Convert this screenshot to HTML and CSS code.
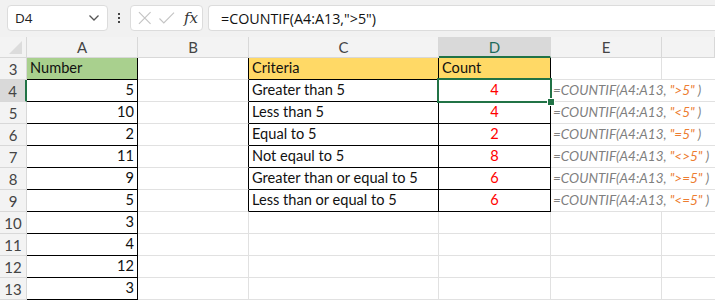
FILE: index.html
```html
<!DOCTYPE html>
<html lang="en">
<head>
    <meta charset="UTF-8">
    <title>COUNTIF examples</title>
    <link rel="stylesheet" href="styles.css">
</head>
<body>
    <!-- Formula bar -->
    <div class="formula-bar">
        <div class="name-box">
            <span>D4</span>
            <svg width="12" height="8" viewBox="0 0 12 8"><path d="M1.5 1.5 L6 6 L10.5 1.5" fill="none" stroke="#555" stroke-width="1.3"/></svg>
        </div>
        <div class="dots"><i></i><i></i><i></i></div>
        <div class="fx-box">
            <svg width="16" height="16" viewBox="0 0 16 16"><path d="M2 2 L14 14 M14 2 L2 14" stroke="#c4c4c4" stroke-width="1.2"/></svg>
            <svg width="18" height="16" viewBox="0 0 18 16"><path d="M1.5 8.5 L6 13 L16.5 2.5" fill="none" stroke="#c4c4c4" stroke-width="1.2"/></svg>
            <span class="fx">fx</span>
        </div>
        <div class="formula-input">=COUNTIF(A4:A13,"&gt;5")</div>
    </div>

    <!-- Sheet -->
    <div class="sheet">
        <div class="corner"></div>
        <div class="col-head">A</div>
        <div class="col-head">B</div>
        <div class="col-head">C</div>
        <div class="col-head sel">D</div>
        <div class="col-head">E</div>
        <div class="col-head last"></div>

        <div class="row-head">3</div>
        <div class="cell tb head-green">Number</div>
        <div class="cell br"></div>
        <div class="cell tb head-yellow">Criteria</div>
        <div class="cell tb head-yellow">Count</div>
        <div class="cell"></div>
        <div class="cell last"></div>

        <div class="row-head sel">4</div>
        <div class="cell tb num">5</div>
        <div class="cell br"></div>
        <div class="cell tb">Greater than 5</div>
        <div class="cell tb cnt active">4</div>
        <div class="cell note"><span>=COUNTIF(A4:A13, <b>"&gt;5"</b> )</span></div>
        <div class="cell last"></div>

        <div class="row-head">5</div>
        <div class="cell tb num">10</div>
        <div class="cell br"></div>
        <div class="cell tb">Less than 5</div>
        <div class="cell tb cnt">4</div>
        <div class="cell note"><span>=COUNTIF(A4:A13, <b>"&lt;5"</b> )</span></div>
        <div class="cell last"></div>

        <div class="row-head">6</div>
        <div class="cell tb num">2</div>
        <div class="cell br"></div>
        <div class="cell tb">Equal to 5</div>
        <div class="cell tb cnt">2</div>
        <div class="cell note"><span>=COUNTIF(A4:A13, <b>"=5"</b> )</span></div>
        <div class="cell last"></div>

        <div class="row-head">7</div>
        <div class="cell tb num">11</div>
        <div class="cell br"></div>
        <div class="cell tb">Not eqaul to 5</div>
        <div class="cell tb cnt">8</div>
        <div class="cell note"><span>=COUNTIF(A4:A13, <b>"&lt;&gt;5"</b> )</span></div>
        <div class="cell last"></div>

        <div class="row-head">8</div>
        <div class="cell tb num">9</div>
        <div class="cell br"></div>
        <div class="cell tb">Greater than or equal to 5</div>
        <div class="cell tb cnt">6</div>
        <div class="cell note"><span>=COUNTIF(A4:A13, <b>"&gt;=5"</b> )</span></div>
        <div class="cell last"></div>

        <div class="row-head">9</div>
        <div class="cell tb num">5</div>
        <div class="cell br"></div>
        <div class="cell tb">Less than or equal to 5</div>
        <div class="cell tb cnt">6</div>
        <div class="cell note"><span>=COUNTIF(A4:A13, <b>"&lt;=5"</b> )</span></div>
        <div class="cell last"></div>

        <div class="row-head">10</div>
        <div class="cell tb num">3</div>
        <div class="cell"></div><div class="cell"></div><div class="cell"></div><div class="cell"></div><div class="cell last"></div>

        <div class="row-head">11</div>
        <div class="cell tb num">4</div>
        <div class="cell"></div><div class="cell"></div><div class="cell"></div><div class="cell"></div><div class="cell last"></div>

        <div class="row-head">12</div>
        <div class="cell tb num">12</div>
        <div class="cell"></div><div class="cell"></div><div class="cell"></div><div class="cell"></div><div class="cell last"></div>

        <div class="row-head">13</div>
        <div class="cell tb num">3</div>
        <div class="cell"></div><div class="cell"></div><div class="cell"></div><div class="cell"></div><div class="cell last"></div>
    </div>
</body>
</html>
```

FILE: styles.css
```css
/* General */
* {
    box-sizing: border-box;
}
body {
    margin: 0;
    width: 715px;
    height: 303px;
    overflow: hidden;
    background-color: #ffffff;
    font-family: Lato, "Open Sans", sans-serif;
}

/* Formula bar */
.formula-bar {
    height: 37px;
    background-color: #f1f1f1;
    display: flex;
    align-items: flex-start;
    padding: 5px 0 0 7px;
}
.name-box {
    width: 101px;
    height: 26px;
    background-color: #ffffff;
    border: 1px solid #dcdcdc;
    border-radius: 4px;
    display: flex;
    align-items: center;
    justify-content: space-between;
    padding: 0 7px 0 7px;
    font-family: "Open Sans", sans-serif;
    font-size: 13.5px;
    color: #222;
}
.dots {
    width: 22px;
    height: 26px;
    display: flex;
    flex-direction: column;
    align-items: center;
    justify-content: center;
    gap: 2px;
}
.dots i {
    width: 2px;
    height: 2px;
    background-color: #444;
}
.fx-box {
    width: 73px;
    height: 26px;
    background-color: #ffffff;
    border: 1px solid #dcdcdc;
    border-radius: 4px;
    display: flex;
    align-items: center;
    padding: 0 4px 0 6px;
    gap: 5px;
}
.fx {
    font-family: "DejaVu Serif", serif;
    font-style: italic;
    font-size: 15px;
    color: #333;
    margin-left: 4px;
}
.formula-input {
    margin-left: 5px;
    flex: 1;
    height: 26px;
    background-color: #ffffff;
    border: 1px solid #dcdcdc;
    border-right: none;
    border-radius: 4px 0 0 4px;
    padding: 0 0 0 12px;
    display: flex;
    align-items: center;
    font-family: "Open Sans", sans-serif;
    font-size: 14.3px;
    color: #111;
}

/* Sheet grid */
.sheet {
    display: grid;
    grid-template-columns: 27px 111px 111px 190px 112px 111px 53px;
    grid-template-rows: 21px repeat(11, 22px);
}
.corner {
    background-color: #f3f3f3;
    border-right: 1px solid #d8d8d8;
    border-bottom: 1px solid #d8d8d8;
    position: relative;
}
.corner::after {
    content: "";
    position: absolute;
    right: 4px;
    bottom: 3px;
    border-left: 13px solid transparent;
    border-bottom: 13px solid #dcdcdc;
}
.col-head {
    background-color: #f3f3f3;
    border-right: 1px solid #d8d8d8;
    border-bottom: 1px solid #d8d8d8;
    display: flex;
    align-items: center;
    justify-content: center;
    font-size: 15px;
    color: #444;
}
.col-head.sel {
    background-color: #d9d9d9;
    border-bottom: 2px solid #217346;
    color: #1f6b5a;
}
.row-head {
    background-color: #f3f3f3;
    border-right: 1px solid #d8d8d8;
    border-bottom: 1px solid #d8d8d8;
    display: flex;
    align-items: center;
    justify-content: center;
    font-size: 15px;
    color: #444;
}
.row-head.sel {
    background-color: #d9d9d9;
    border-right: 2px solid #217346;
}
.cell {
    border-right: 1px solid #e1e1e1;
    border-bottom: 1px solid #e1e1e1;
    display: flex;
    align-items: flex-end;
    padding: 0 3px 2px 3px;
    font-size: 14.6px;
    line-height: 18px;
    color: #111;
    white-space: nowrap;
}
.cell.last {
    border-right: none;
}
.cell.tb {
    border-right-color: #000;
    border-bottom-color: #000;
}
.cell.br {
    border-right-color: #000;
}
.head-green {
    background-color: #a9d08e;
}
.head-yellow {
    background-color: #ffd966;
}
.num {
    justify-content: flex-end;
}
.cnt {
    justify-content: center;
    color: #ff0000;
}
.note {
    border-right: none;
    font-style: italic;
    font-size: 13.5px;
    color: #7f7f7f;
    padding-left: 2px;
}
.note b {
    font-weight: normal;
    color: #ed7d31;
}

/* Active cell */
.active {
    position: relative;
}
.active::after {
    content: "";
    position: absolute;
    left: -2px;
    top: -2px;
    right: -2px;
    bottom: -2px;
    border: 2px solid #217346;
}
.active::before {
    content: "";
    position: absolute;
    right: -5px;
    bottom: -5px;
    width: 6px;
    height: 6px;
    background-color: #217346;
    border: 1px solid #fff;
    z-index: 1;
}
```
